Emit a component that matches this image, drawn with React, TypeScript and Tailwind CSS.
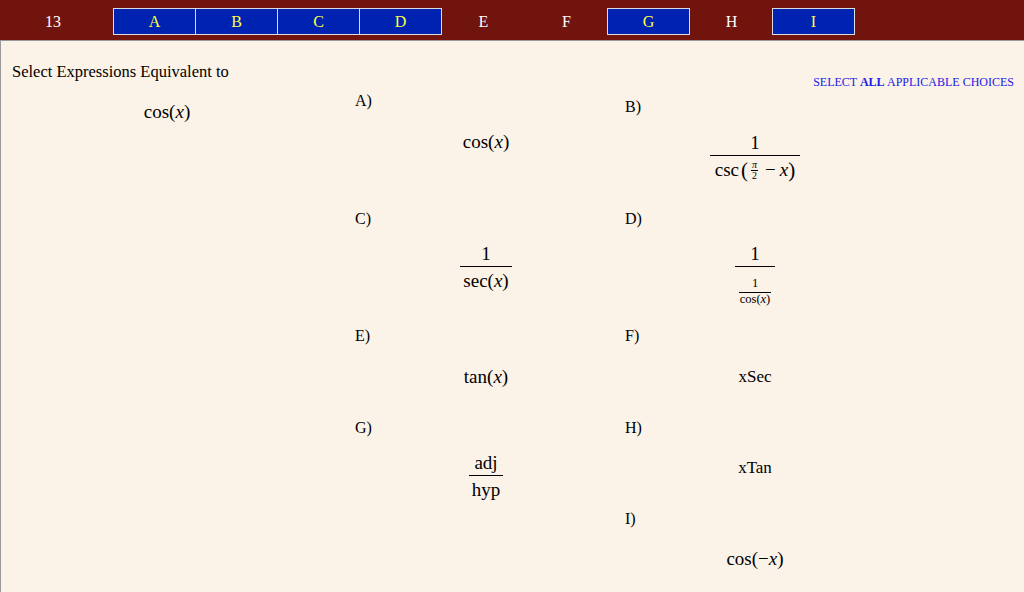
import React from "react";

const serif = { fontFamily: '"Liberation Serif", "Times New Roman", serif' };

function HeaderCell({ label, boxed }: { label: string; boxed?: boolean }) {
  if (boxed) {
    return (
      <div className="w-[83px] h-[27px] flex items-center justify-center bg-[#0022b0] border border-[#dcdcdc] text-[#ffff44] text-[16px] ml-[-1px]">
        {label}
      </div>
    );
  }
  return (
    <div className="w-[83px] h-[27px] flex items-center justify-center text-white text-[16px]">
      {label}
    </div>
  );
}

function Frac({
  num,
  den,
  className = "",
}: {
  num: React.ReactNode;
  den: React.ReactNode;
  className?: string;
}) {
  return (
    <span className={"inline-flex flex-col items-center align-middle " + className}>
      <span className="leading-[18px] pb-[3px]">{num}</span>
      <span className="border-t border-black text-center px-[3px]">{den}</span>
    </span>
  );
}

function X() {
  return <i>x</i>;
}

function Label({ children, className = "" }: { children: React.ReactNode; className?: string }) {
  return <div className={"text-[16px] leading-[16px] " + className}>{children}</div>;
}

export default function App() {
  return (
    <div className="w-[1024px] h-[592px] bg-[#fbf2e8] overflow-hidden text-black" style={serif}>
      <div className="h-[41px] bg-[#71140e] flex items-start pt-[8px] border-b border-[#9a9a9a]">
        <div className="w-[114px] h-[27px] pr-[8px] flex items-center justify-center text-white text-[16px]">13</div>
        <HeaderCell label="A" boxed />
        <HeaderCell label="B" boxed />
        <HeaderCell label="C" boxed />
        <HeaderCell label="D" boxed />
        <HeaderCell label="E" />
        <HeaderCell label="F" />
        <HeaderCell label="G" boxed />
        <HeaderCell label="H" />
        <HeaderCell label="I" boxed />
      </div>
      <div className="flex h-[551px] border-l border-[#9a9a9a]">
        <div className="w-[349px] pl-[11px] pt-[22px]">
          <div className="text-[16.5px] leading-[18px]">Select Expressions Equivalent to</div>
          <div className="w-[310px] text-center text-[19px] leading-[20px] mt-[21px]">
            cos(<X />)
          </div>
        </div>
        <div className="flex-1 flex flex-col">
          <div className="text-right pr-[10px] pt-[34px] text-[12px] leading-[14px] text-[#2020e6]">
            SELECT <b>ALL</b> APPLICABLE CHOICES
          </div>
          <div className="grid grid-cols-[272px_266px] text-[19px]">
            {/* Row 1 */}
            <div className="h-[122px]">
              <Label className="pl-[5px] pt-[4px]">A)</Label>
              <div className="text-center leading-[20px] mt-[23px]">
                cos(<X />)
              </div>
            </div>
            <div className="h-[122px]">
              <Label className="pl-[3px] pt-[10px]">B)</Label>
              <div className="text-center mt-[19px]">
                <Frac
                  num="1"
                  den={
                    <span className="inline-flex items-center leading-[26px] px-[2px]">
                      csc
                      <span className="text-[21px] ml-[2px]">(</span>
                      <span className="inline-flex flex-col items-center text-[10px] leading-[10px] mx-[3px]">
                        <i>π</i>
                        <span className="border-t border-black px-[1px]">2</span>
                      </span>
                      <span className="mx-[4px]">−</span>
                      <X />
                      <span className="text-[21px]">)</span>
                    </span>
                  }
                />
              </div>
            </div>
            {/* Row 2 */}
            <div className="h-[117px]">
              <Label className="pl-[5px]">C)</Label>
              <div className="text-center mt-[18px]">
                <Frac num="1" den={<span className="leading-[22px]">sec(<X />)</span>} />
              </div>
            </div>
            <div className="h-[117px]">
              <Label className="pl-[3px]">D)</Label>
              <div className="text-center mt-[18px]">
                <Frac
                  num="1"
                  den={
                    <span className="inline-flex flex-col items-center text-[12.5px] px-[1px]">
                      <span className="leading-[14px] pb-[2px]">1</span>
                      <span className="border-t border-black px-[1px] leading-[13px]">
                        cos(<X />)
                      </span>
                    </span>
                  }
                />
              </div>
            </div>
            {/* Row 3 */}
            <div className="h-[92px]">
              <Label className="pl-[5px]">E)</Label>
              <div className="text-center leading-[20px] mt-[23px]">
                tan(<X />)
              </div>
            </div>
            <div className="h-[92px]">
              <Label className="pl-[3px]">F)</Label>
              <div className="text-center leading-[20px] mt-[23px] text-[17px]">xSec</div>
            </div>
            {/* Row 4 */}
            <div className="h-[91px]">
              <Label className="pl-[5px]">G)</Label>
              <div className="text-center mt-[18px]">
                <Frac num="adj" den={<span className="leading-[20px]">hyp</span>} />
              </div>
            </div>
            <div className="h-[91px]">
              <Label className="pl-[3px]">H)</Label>
              <div className="text-center leading-[20px] mt-[22px] text-[17px]">xTan</div>
            </div>
            {/* Row 5 */}
            <div className="h-[80px]"></div>
            <div className="h-[80px]">
              <Label className="pl-[3px]">I)</Label>
              <div className="text-center leading-[20px] mt-[22px]">
                cos(−<X />)
              </div>
            </div>
          </div>
        </div>
      </div>
    </div>
  );
}
